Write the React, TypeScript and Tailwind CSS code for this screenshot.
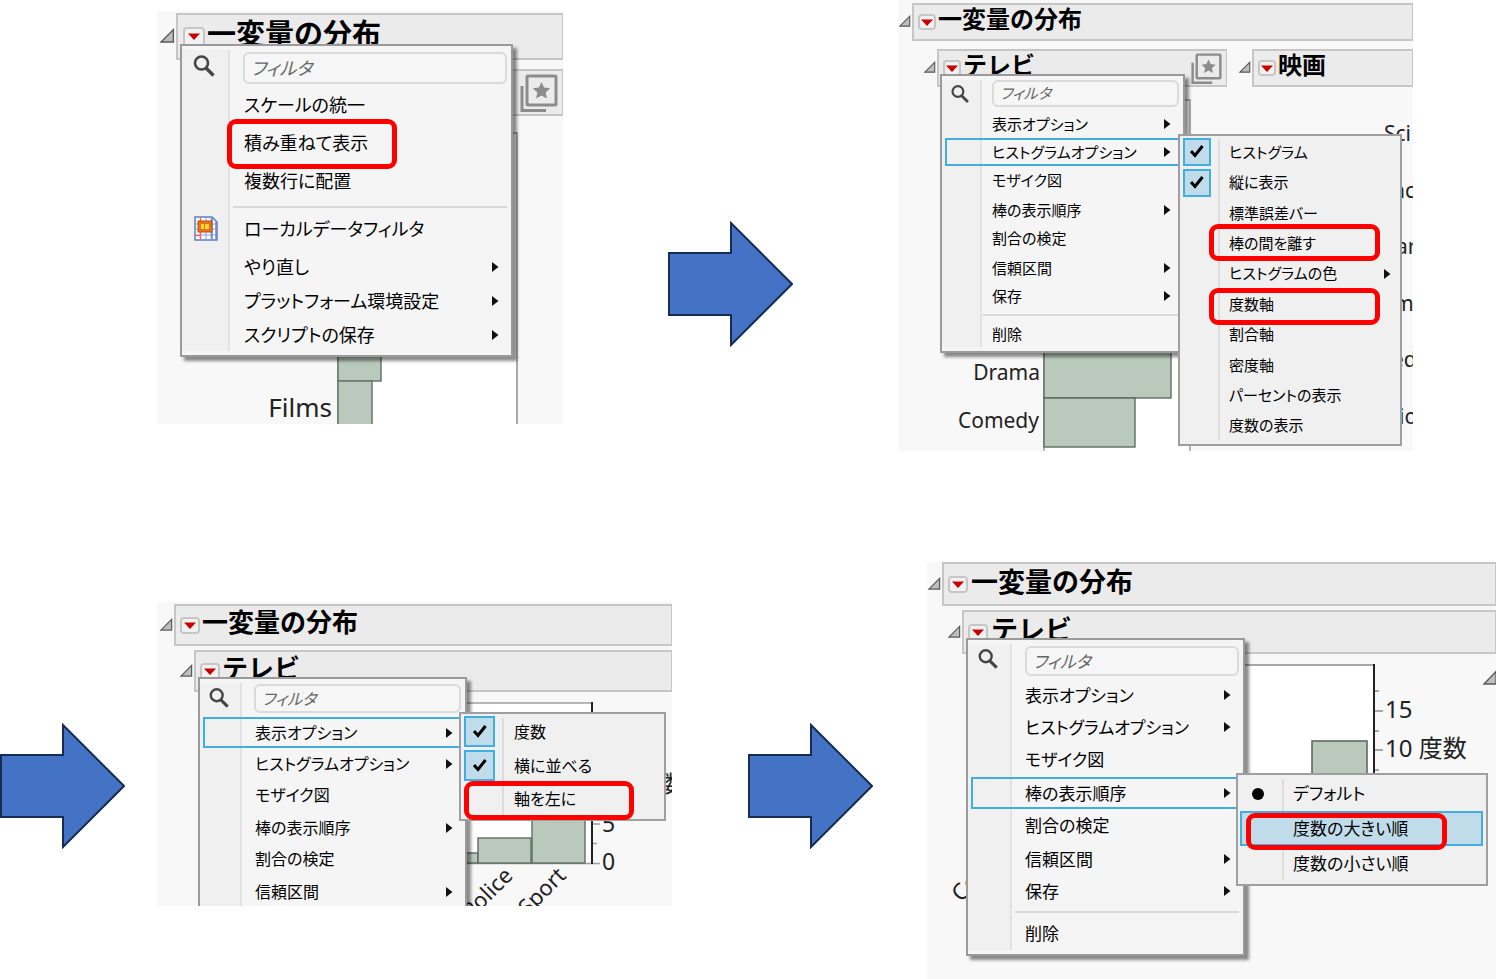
import { ReactNode } from "react";
import clsx from "clsx";

type Item = {
  label: string;
  sub?: boolean;
  active?: boolean;
  icon?: ReactNode;
};

type Option = {
  label: string;
  checked?: boolean;
  active?: boolean;
  sub?: boolean;
};

// every panel is the same interface at a slightly different zoom level
const sizes = {
  xl: {
    bar: "h-[47px]", fold: "w-[19px]", tri: "w-[15px] h-[15px]", drop: "w-[22px] h-5 ml-[5px] mr-0.5", title: "text-[29px]",
    text: "text-[18px]", row: "h-[34px]", plain: "mb-1", pad: "pl-[59px]", gutter: "w-[48px]",
    search: "pt-1.5 pb-1 pl-[61px]", input: "h-8", glass: "left-[10px] w-6 h-6", line: "ml-[51px]",
    box: "", optPad: "", optGutter: "",
  },
  sm: {
    bar: "h-[38px]", fold: "w-[14px]", tri: "w-3 h-3", drop: "w-[18px] h-4 ml-1 mr-0.5", title: "text-[24px]",
    text: "text-[15px]", row: "h-7", plain: "mb-0.5", pad: "pl-[47px]", gutter: "w-10",
    search: "pt-1 pb-[3px] pl-[50px]", input: "h-[27px]", glass: "left-2 w-5 h-5", line: "ml-[41px]",
    box: "w-7 h-7", optPad: "pl-[49px]", optGutter: "w-10",
  },
  md: {
    bar: "h-[42px]", fold: "w-[17px]", tri: "w-[13px] h-[13px]", drop: "w-5 h-[17px] ml-1 mr-0.5", title: "text-[26px]",
    text: "text-[16px]", row: "h-[31px]", plain: "mb-0.5", pad: "pl-[52px]", gutter: "w-[42px]",
    search: "pt-[5px] pb-1 pl-[54px]", input: "h-[29px]", glass: "left-2 w-[22px] h-[22px]", line: "ml-[44px]",
    box: "w-[31px] h-[31px]", optPad: "pl-[53px]", optGutter: "w-[43px]",
  },
  lg: {
    bar: "h-11", fold: "w-[15px]", tri: "w-[13px] h-[13px]", drop: "w-5 h-[17px] ml-1 mr-[3px]", title: "text-[27px]",
    text: "text-[17px]", row: "h-8", plain: "mb-0.5", pad: "pl-[54px]", gutter: "w-[44px]",
    search: "pt-1.5 pb-[3px] pl-[57px]", input: "h-[30px]", glass: "left-[9px] w-[22px] h-[22px]", line: "ml-[47px]",
    box: "w-8 h-8", optPad: "pl-[55px]", optGutter: "w-[46px]",
  },
};

type Size = keyof typeof sizes;

const StarStack = ({ className }: { className?: string }) => (
  <svg viewBox="0 0 38 38" className={className} fill="none" stroke="#8c8c8c">
    <rect x="7" y="2" width="29" height="29" rx="1" strokeWidth="3" />
    <path d="M2 12v24.500h24" strokeWidth="3" />
    <path d="M21.500 8l2.600 5.600 6.100.7-4.500 4.200 1.200 6.100-5.400-3-5.400 3 1.200-6.100-4.500-4.200 6.100-.7z" fill="#8c8c8c" stroke="none" />
  </svg>
);

const Glass = ({ className }: { className?: string }) => (
  <svg viewBox="0 0 24 24" className={className} fill="none" stroke="#454545">
    <circle cx="9.500" cy="9" r="6.500" strokeWidth="2.600" />
    <path d="M14 14l7.500 7.500" strokeWidth="3.400" />
  </svg>
);

const DataFilterIcon = () => (
  <svg viewBox="0 0 24 26" className="absolute left-[9px] top-1 w-6 h-[26px]">
    <path d="M1 1h17l5 5v18H1z" fill="#fff" stroke="#5c7fc4" strokeWidth="1.500" />
    <path d="M1 8h22M1 13h22M1 19h22M12 1v23M17 1v23" stroke="#7ba3dc" strokeWidth="1" />
    <path d="M18 2v22M22 6v18" stroke="#6f86cc" strokeWidth="1.500" />
    <path d="M6.500 1v23M1 19.500h5" stroke="#f06a6a" strokeWidth="1.500" />
    <rect x="4" y="5" width="14" height="11" fill="#e5731a" stroke="#b9520e" />
    <path d="M7 8h3v5H7zM11 8h4v5h-4z" fill="#ffd53d" />
  </svg>
);

const Caret = () => (
  <svg viewBox="0 0 7 10" className="ml-auto w-[7px] h-[10px]">
    <path d="M0 0l6.500 5L0 10z" fill="#111" />
  </svg>
);

const Fold = ({ size }: { size: Size }) => (
  <svg viewBox="0 0 14 14" className={clsx("shrink-0", sizes[size].tri)}>
    <path d="M1 13L12.500 1.500V13z" fill="#bdbdbd" stroke="#5a5a5a" strokeWidth="1.300" />
  </svg>
);

const Outline = ({ size, title, className, star }: {
  size: Size; title?: string; className?: string; star?: string;
}) => {
  const s = sizes[size];

  return (
    <div className={clsx("flex items-center", className)}>
      <span className={clsx("flex shrink-0 justify-end pr-px pb-0.5", s.fold)}><Fold size={size} /></span>
      <div className={clsx("flex flex-1 min-w-0 items-center border-2 border-r border-[#c6c6c6] bg-[#ebebeb]", s.bar)}>
        {title && (
          <>
            <button
              type="button"
              aria-label={title}
              className={clsx("flex shrink-0 items-center justify-center rounded border-2 border-[#c6c6c6] bg-[#f1f1f1]", s.drop)}
            >
              <svg viewBox="0 0 12 7" className="w-3 h-[7px]"><path d="M0 .5h12L6 7z" fill="#c80000" /></svg>
            </button>
            <h2 className={clsx("pb-2 font-bold leading-none whitespace-nowrap [font-feature-settings:normal]", s.title)}>{title}</h2>
          </>
        )}
        {star && <StarStack className={clsx("ml-auto mr-1 shrink-0", star)} />}
      </div>
    </div>
  );
};

const Menu = ({ size, items, className }: {
  size: Size; items: Item[][]; className: string;
}) => {
  const s = sizes[size];

  return (
    <div className={clsx("absolute border-2 border-[#9a9a9a] bg-[#f5f5f5] shadow-[4px_4px_3px_rgba(0,0,0,0.45)]", s.text, className)}>
      <div className={clsx("absolute inset-y-1 left-0 border-r-2 border-[#e2e2e2] bg-[#f0f0f0]", s.gutter)} />
      <div className={clsx("relative flex pr-1", s.search)}>
        <Glass className={clsx("absolute top-2", s.glass)} />
        <input
          type="text"
          aria-label="フィルタ"
          placeholder="フィルタ"
          className={clsx("w-full min-w-0 rounded-md border-2 border-[#dadada] bg-[#f6f6f6] px-1.5 pb-0.5 italic placeholder:text-[#666]", s.input)}
        />
      </div>
      {items.map((group, i) => (
        <div key={i} className="relative">
          {i > 0 && (
            <div className="flex h-[10px] items-center">
              <hr className={clsx("mr-1 flex-1 border-t-2 border-[#d9d9d9]", s.line)} />
            </div>
          )}
          {group.map((item) => (
            <button
              key={item.label}
              type="button"
              className={clsx(
                "relative mx-[3px] flex w-[calc(100%-6px)] items-center whitespace-nowrap pr-[9px] text-left leading-none",
                s.row,
                s.pad,
                !item.sub && s.plain,
                item.active && "shadow-[inset_0_0_0_2px_#42aee0]"
              )}
            >
              {item.icon}
              <span className="pb-0.5">{item.label}</span>
              {item.sub && <Caret />}
            </button>
          ))}
        </div>
      ))}
    </div>
  );
};

const SubMenu = ({ size, name, type = "checkbox", options, className }: {
  size: Size; name: string; type?: "checkbox" | "radio"; options: Option[]; className: string;
}) => {
  const s = sizes[size];

  return (
    <div className={clsx("absolute flex flex-col border-2 border-[#9f9f9f] bg-[#f0f0f0] pt-px pb-[3px]", s.text, className)}>
      <div className={clsx("absolute inset-y-1 left-0 border-r-2 border-[#dcdcdc]", s.optGutter)} />
      {options.map((option) => (
        <label
          key={option.label}
          className={clsx("relative flex flex-1 items-center whitespace-nowrap pr-[9px] leading-none", s.optPad)}
        >
          {option.active && <span className="absolute inset-y-0 left-0.5 right-[3px] border-2 border-[#42aee0] bg-[#c0dcea]" />}
          <input
            type={type}
            name={name}
            defaultChecked={option.checked}
            className={clsx(
              "absolute left-[3px] appearance-none",
              s.box,
              type === "checkbox" && "checked:border-2 checked:border-[#42aee0] checked:bg-[#c0dcea]"
            )}
          />
          {option.checked && type === "checkbox" && (
            <span className={clsx("absolute left-[3px] flex items-center justify-center pb-0.5", s.box)}>
              <svg viewBox="0 0 14 14" className="w-[14px] h-[14px]" fill="none">
                <path d="M1 7l4 4.500L12.500 2" stroke="#000" strokeWidth="3" />
              </svg>
            </span>
          )}
          {option.checked && type === "radio" && (
            <span className="absolute left-[14px] w-3 h-3 rounded-full bg-black" />
          )}
          <span className="relative pb-0.5">{option.label}</span>
          {option.sub && <Caret />}
        </label>
      ))}
    </div>
  );
};

const Mark = ({ className }: { className: string }) => (
  <div className={clsx("pointer-events-none absolute rounded-[9px] border-[5px] border-[#fe0000]", className)} />
);

const Arrow = ({ className }: { className?: string }) => (
  <svg viewBox="0 0 125 126" className={clsx("w-[125px] h-[126px] shrink-0", className)}>
    <path d="M1 32h62V2l61 61-61 61V94H1z" fill="#4472c4" stroke="#172c51" strokeWidth="2" />
  </svg>
);

const televisionMenu = (active: string): Item[][] => [
  [
    { label: "表示オプション", sub: true },
    { label: "ヒストグラムオプション", sub: true },
    { label: "モザイク図" },
    { label: "棒の表示順序", sub: true },
    { label: "割合の検定" },
    { label: "信頼区間", sub: true },
    { label: "保存", sub: true },
  ].map((item) => ({ ...item, active: item.label === active })),
  [{ label: "削除" }],
];

const platformMenu: Item[][] = [
  [{ label: "スケールの統一" }, { label: "積み重ねて表示" }, { label: "複数行に配置" }],
  [
    { label: "ローカルデータフィルタ", icon: <DataFilterIcon /> },
    { label: "やり直し", sub: true },
    { label: "プラットフォーム環境設定", sub: true },
    { label: "スクリプトの保存", sub: true },
  ],
];

const panel = "relative shrink-0 overflow-hidden bg-[#f8f8f8]";
const chart = "block font-['Noto_Sans','Noto_Sans_CJK_JP',sans-serif]";

const StackPanel = () => (
  <section className={clsx(panel, "mt-[11px] w-[406px] pt-0.5")}>
    <Outline size="xl" title="一変量の分布" />
    <Outline size="xl" className="mt-[9px] ml-5" star="w-[38px] h-[38px]" />
    <svg viewBox="157 116 406 308" width="406" height="308" className={chart}>
      <path d="M338 133h179v291H338z" fill="#fff" />
      <path d="M338 424V133h179v291" fill="none" stroke="#a9a9a9" strokeWidth="2" />
      <g fill="#b9cabc" stroke="#68756b" strokeWidth="1.500">
        <rect x="338" y="330" width="43" height="51" />
        <rect x="338" y="381" width="34" height="50" />
      </g>
      <text x="332" y="417" textAnchor="end" fontSize="26" fill="#222">Films</text>
    </svg>
    <Menu size="xl" items={platformMenu} className="left-[23px] top-[33px] h-[313px] w-[333px]" />
    <Mark className="left-[70px] top-[108px] h-[50px] w-[170px]" />
  </section>
);

const HistogramPanel = () => (
  <section className={clsx(panel, "w-[515px] pt-[3px]")}>
    <Outline size="sm" title="一変量の分布" />
    <div className="mt-2 flex">
      <Outline size="sm" title="テレビ" className="ml-[25px] w-[304px]" star="w-[31px] h-[31px]" />
      <Outline size="sm" title="映画" className="ml-[11px] flex-1" />
    </div>
    <svg viewBox="898 87 515 364" width="515" height="364" className={chart}>
      <path d="M1044 100h146v351h-146z" fill="#fff" />
      <path d="M1044 451V100h146v351" fill="none" stroke="#a0a0a0" strokeWidth="1.500" />
      <g fill="#b9cabc" stroke="#56635a" strokeWidth="1.300">
        <rect x="1044" y="345" width="127" height="53" />
        <rect x="1044" y="398" width="91" height="49" />
      </g>
      <g fontSize="21" fill="#222">
        <text x="1040" y="380" textAnchor="end">Drama</text>
        <text x="1039" y="428" textAnchor="end">Comedy</text>
        <text x="1384" y="141">Sci</text>
        <text x="1392" y="198">nc</text>
        <text x="1396" y="254">ar</text>
        <text x="1394" y="311">m</text>
        <text x="1392" y="367">ed</text>
        <text x="1399" y="424">io</text>
      </g>
    </svg>
    <Menu size="sm" items={televisionMenu("ヒストグラムオプション")} className="left-[42px] top-[74px] h-[279px] w-[245px]" />
    <SubMenu
      size="sm"
      name="histogram"
      className="left-[280px] top-[134px] h-[312px] w-[224px]"
      options={[
        { label: "ヒストグラム", checked: true },
        { label: "縦に表示", checked: true },
        { label: "標準誤差バー" },
        { label: "棒の間を離す" },
        { label: "ヒストグラムの色", sub: true },
        { label: "度数軸" },
        { label: "割合軸" },
        { label: "密度軸" },
        { label: "パーセントの表示" },
        { label: "度数の表示" },
      ]}
    />
    <Mark className="left-[311px] top-[224px] h-[37px] w-[171px]" />
    <Mark className="left-[311px] top-[288px] h-[37px] w-[171px]" />
  </section>
);

const DisplayPanel = () => (
  <section className={clsx(panel, "mt-10 ml-8 w-[515px] pt-0.5")}>
    <Outline size="md" title="一変量の分布" />
    <Outline size="md" title="テレビ" className="mt-1 ml-5" />
    <svg viewBox="157 692 515 214" width="515" height="214" className={chart}>
      <path d="M400 703h192v160H400z" fill="#fff" />
      <path d="M400 703h192M400 863.500h200M592 824h8M592 843.500h5" stroke="#a0a0a0" strokeWidth="1.500" />
      <path d="M592 702v162" stroke="#222" strokeWidth="2" />
      <g fill="#b9cabc" stroke="#56635a" strokeWidth="1.300">
        <rect x="425" y="853" width="53" height="10" />
        <rect x="478" y="838" width="53" height="25" />
        <rect x="532" y="790" width="53" height="73" />
      </g>
      <g fontSize="23" fill="#222">
        <text x="602" y="832">5</text>
        <text x="602" y="870">0</text>
        <text x="664" y="792">数</text>
      </g>
      <g fontSize="22" fill="#222" textAnchor="end">
        <text transform="translate(514 877) rotate(-45)">Police</text>
        <text transform="translate(567 877) rotate(-45)">Sport</text>
      </g>
    </svg>
    <Menu size="md" items={televisionMenu("表示オプション")} className="left-[41px] top-[75px] w-[269px]" />
    <SubMenu
      size="md"
      name="display"
      className="left-[302px] top-[110px] h-[109px] w-[207px]"
      options={[{ label: "度数", checked: true }, { label: "横に並べる", checked: true }, { label: "軸を左に" }]}
    />
    <Mark className="left-[307px] top-[179px] h-[39px] w-[170px]" />
  </section>
);

const OrderPanel = () => (
  <section className={clsx(panel, "ml-[54px] min-w-[569px] flex-1")}>
    <Outline size="lg" title="一変量の分布" />
    <Outline size="lg" title="テレビ" className="mt-1 ml-5" />
    <svg viewBox="927 654 569 325" width="569" height="325" className={chart}>
      <path d="M1100 665h274v220h-274z" fill="#fff" />
      <path d="M1100 665h274M1374 711h9M1374 750h9M1374 691h5M1374 731h5M1374 770h5" stroke="#8c8c8c" strokeWidth="1.500" />
      <path d="M1374 664v180" stroke="#222" strokeWidth="2" />
      <rect x="1312" y="741" width="55" height="80" fill="#b9cabc" stroke="#56635a" strokeWidth="1.500" />
      <path d="M1484 684l12-12.500V684z" fill="#bdbdbd" stroke="#5a5a5a" strokeWidth="1.300" />
      <g fontSize="24" fill="#222">
        <text x="1385" y="718">15</text>
        <text x="1385" y="757">10 度数</text>
      </g>
      <text fontSize="23" fill="#222" transform="translate(961 903) rotate(-45)">Co</text>
    </svg>
    <Menu size="lg" items={televisionMenu("棒の表示順序")} className="left-[39px] top-[76px] h-[318px] w-[279px]" />
    <SubMenu
      size="lg"
      name="order"
      type="radio"
      className="left-[309px] top-[211px] h-[113px] w-[252px]"
      options={[
        { label: "デフォルト", checked: true },
        { label: "度数の大きい順", active: true },
        { label: "度数の小さい順" },
      ]}
    />
    <Mark className="left-[319px] top-[251px] h-[37px] w-[201px]" />
  </section>
);

const App = () => {
  return (
    <main className="min-h-screen overflow-hidden bg-white font-['Noto_Sans_CJK_JP',sans-serif] text-black [font-feature-settings:'palt']">
      <div className="flex items-start justify-between pl-[157px] pr-[83px]">
        <StackPanel />
        <Arrow className="mt-[221px]" />
        <HistogramPanel />
      </div>
      <div className="mt-[111px] flex items-start">
        <Arrow className="mt-[161px]" />
        <DisplayPanel />
        <Arrow className="mt-[161px] ml-[76px]" />
        <OrderPanel />
      </div>
    </main>
  );
};

export default App;
